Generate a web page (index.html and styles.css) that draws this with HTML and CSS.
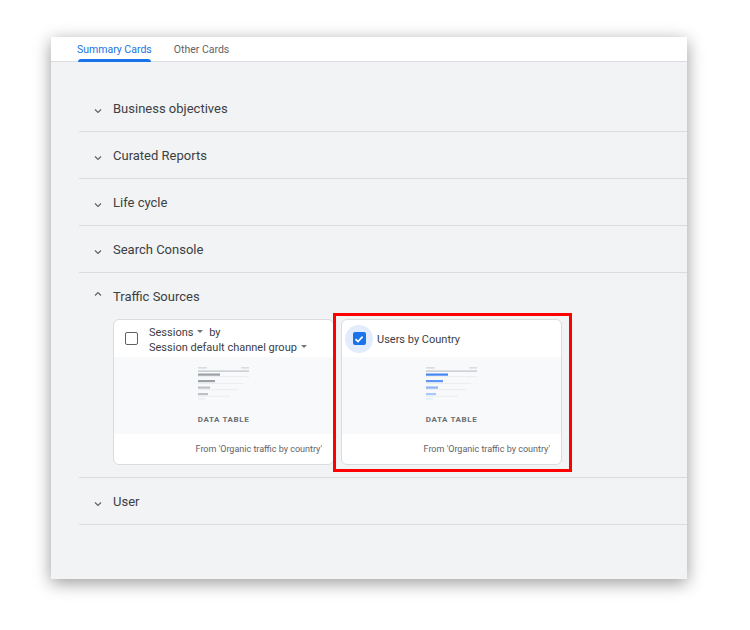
FILE: index.html
```html
<!DOCTYPE html>
<html>
<head>
<meta charset="utf-8">
<link rel="stylesheet" href="styles.css">
</head>
<body>
<div class="page">
  <div class="panel">
    <div class="tabs">
      <div class="tab active">Summary Cards</div>
      <div class="tab">Other Cards</div>
    </div>
    <div class="content">
      <div class="section">
        <div class="sec-head"><svg class="chev" viewBox="0 0 8 12"><path d="M1 6.5 L4 9.5 L7 6.5"/></svg><span>Business objectives</span></div>
      </div>
      <div class="section">
        <div class="sec-head"><svg class="chev" viewBox="0 0 8 12"><path d="M1 6.5 L4 9.5 L7 6.5"/></svg><span>Curated Reports</span></div>
      </div>
      <div class="section">
        <div class="sec-head"><svg class="chev" viewBox="0 0 8 12"><path d="M1 6.5 L4 9.5 L7 6.5"/></svg><span>Life cycle</span></div>
      </div>
      <div class="section">
        <div class="sec-head"><svg class="chev" viewBox="0 0 8 12"><path d="M1 6.5 L4 9.5 L7 6.5"/></svg><span>Search Console</span></div>
      </div>
      <div class="section open">
        <div class="sec-head"><svg class="chev" viewBox="0 0 8 12"><path d="M1 4.5 L4 1.5 L7 4.5"/></svg><span>Traffic Sources</span></div>
        <div class="cards">
          <div class="card-wrap">
            <div class="card">
              <div class="card-head">
                <div class="cb-box"><div class="cb"></div></div>
                <div class="card-title">
                  <div>Sessions<span class="caret"></span> by</div>
                  <div>Session default channel group<span class="caret"></span></div>
                </div>
              </div>
              <div class="card-body">
                <svg class="thumb" viewBox="0 0 52 34">
                  <rect x="0" y="1" width="9" height="1.6" fill="#dadce0"/>
                  <rect x="43" y="1" width="8" height="1.6" fill="#dadce0"/>
                  <rect x="0" y="4.5" width="51" height="1.2" fill="#bdc1c6"/>
                  <rect x="0" y="7.5" width="22" height="2.2" fill="#9aa0a6"/>
                  <rect x="0" y="10.3" width="51" height="0.8" fill="#e8eaed"/>
                  <rect x="0" y="14" width="17" height="2.2" fill="#9aa0a6"/>
                  <rect x="0" y="17" width="45" height="0.8" fill="#e8eaed"/>
                  <rect x="0" y="20.5" width="12" height="2.2" fill="#bdc1c6"/>
                  <rect x="0" y="23.3" width="40" height="0.8" fill="#e8eaed"/>
                  <rect x="0" y="27" width="10" height="2.2" fill="#bdc1c6"/>
                  <rect x="0" y="29.8" width="32" height="0.8" fill="#e8eaed"/>
                  <rect x="0" y="32" width="7" height="1.6" fill="#eceef0"/>
                </svg>
                <div class="card-label">DATA TABLE</div>
              </div>
              <div class="card-foot">From 'Organic traffic by country'</div>
            </div>
          </div>
          <div class="card-wrap">
            <div class="card">
              <div class="card-head">
                <div class="cb-box halo"><div class="cb checked"><svg viewBox="0 0 12 12"><path d="M2.5 6.2 L5 8.6 L9.6 3.6"/></svg></div></div>
                <div class="card-title single">Users by Country</div>
              </div>
              <div class="card-body">
                <svg class="thumb" viewBox="0 0 52 34">
                  <rect x="0" y="1" width="9" height="1.6" fill="#dadce0"/>
                  <rect x="43" y="1" width="8" height="1.6" fill="#dadce0"/>
                  <rect x="0" y="4.5" width="51" height="1.2" fill="#bdc1c6"/>
                  <rect x="0" y="7.5" width="22" height="2.2" fill="#4285f4"/>
                  <rect x="0" y="10.3" width="51" height="0.8" fill="#e8eaed"/>
                  <rect x="0" y="14" width="17" height="2.2" fill="#5e97f6"/>
                  <rect x="0" y="17" width="45" height="0.8" fill="#e8eaed"/>
                  <rect x="0" y="20.5" width="12" height="2.2" fill="#8ab4f8"/>
                  <rect x="0" y="23.3" width="40" height="0.8" fill="#e8eaed"/>
                  <rect x="0" y="27" width="10" height="2.2" fill="#a8c7fa"/>
                  <rect x="0" y="29.8" width="32" height="0.8" fill="#e8eaed"/>
                  <rect x="0" y="32" width="7" height="1.6" fill="#e3edfd"/>
                </svg>
                <div class="card-label">DATA TABLE</div>
              </div>
              <div class="card-foot">From 'Organic traffic by country'</div>
            </div>
            <div class="highlight"></div>
          </div>
        </div>
      </div>
      <div class="section">
        <div class="sec-head"><svg class="chev" viewBox="0 0 8 12"><path d="M1 6.5 L4 9.5 L7 6.5"/></svg><span>User</span></div>
      </div>
    </div>
  </div>
</div>
</body>
</html>
```

FILE: styles.css
```css
* { box-sizing: border-box; }
html, body { margin: 0; padding: 0; background: #ffffff; }
body {
  font-family: Roboto, "Liberation Sans", Arial, sans-serif;
  color: #3c4043;
}
.page {
  padding: 37px 0 51px 51px;
}
.panel {
  width: 636px;
  height: 542px;
  background: #f1f3f4;
  box-shadow: 0 4px 16px rgba(0, 0, 0, 0.4);
  overflow: hidden;
}
.tabs {
  height: 25px;
  background: #ffffff;
  border-bottom: 1px solid #dadce0;
  display: flex;
  gap: 22px;
  padding-left: 26px;
}
.tab {
  position: relative;
  height: 24px;
  padding-top: 1px;
  display: flex;
  align-items: center;
  font-size: 10.5px;
  color: #5f6368;
}
.tab.active { color: #1a73e8; }
.tab.active::after {
  content: "";
  position: absolute;
  left: 1px;
  right: 1px;
  bottom: -1px;
  height: 3px;
  background: #1a73e8;
  border-radius: 3px 3px 0 0;
}
.content {
  padding: 23px 0 0 28px;
}
.section {
  border-bottom: 1px solid #dadce0;
}
.sec-head {
  height: 46px;
  display: flex;
  align-items: center;
  padding-left: 15px;
  font-size: 13px;
  color: #3c4043;
}
.chev {
  width: 8px;
  height: 12px;
  margin-right: 11px;
  margin-top: 1px;
}
.chev path {
  fill: none;
  stroke: #5f6368;
  stroke-width: 1.2;
}
.section.open { padding-bottom: 12px; }
.cards {
  display: flex;
  gap: 7px;
  padding-left: 34px;
}
.card-wrap {
  position: relative;
}
.card {
  width: 221px;
  height: 146px;
  background: #ffffff;
  border: 1px solid #dadce0;
  border-radius: 6px;
  overflow: hidden;
  display: flex;
  flex-direction: column;
}
.card-head {
  height: 37px;
  display: flex;
  align-items: center;
  padding-left: 3px;
  flex-shrink: 0;
}
.cb-box {
  width: 28px;
  height: 28px;
  border-radius: 50%;
  display: flex;
  align-items: center;
  justify-content: center;
  margin-right: 4px;
  flex-shrink: 0;
}
.cb-box.halo { background: #e2ecfc; }
.cb {
  width: 13px;
  height: 13px;
  border: 1.6px solid #5f6368;
  border-radius: 2px;
}
.cb.checked {
  background: #1a73e8;
  border: none;
  display: flex;
  align-items: center;
  justify-content: center;
}
.cb.checked svg { width: 12px; height: 12px; }
.cb.checked path {
  fill: none;
  stroke: #ffffff;
  stroke-width: 1.6;
}
.card-title {
  font-size: 11px;
  line-height: 15px;
  color: #3c4043;
  margin-top: 2px;
}
.card-title.single { margin-top: 1px; }
.caret {
  display: inline-block;
  width: 0;
  height: 0;
  border-left: 3.5px solid transparent;
  border-right: 3.5px solid transparent;
  border-top: 3.5px solid #70757a;
  margin: 0 3px 2px 4px;
  vertical-align: middle;
}
.card-body {
  height: 77px;
  background: #f8f9fa;
  display: flex;
  flex-direction: column;
  align-items: center;
  padding-top: 9px;
  flex-shrink: 0;
}
.thumb {
  width: 52px;
  height: 34px;
  margin-left: 1px;
}
.card-label {
  margin-top: 14px;
  font-size: 8px;
  line-height: 12px;
  font-weight: 700;
  letter-spacing: 0.6px;
  color: #6b6f74;
}
.card-foot {
  height: 30px;
  line-height: 30px;
  text-align: right;
  padding-right: 11px;
  font-size: 9px;
  color: #5f6368;
}
.highlight {
  position: absolute;
  left: -8px;
  top: -6px;
  width: 239px;
  height: 159px;
  border: 3px solid #ff0000;
  pointer-events: none;
}
```
